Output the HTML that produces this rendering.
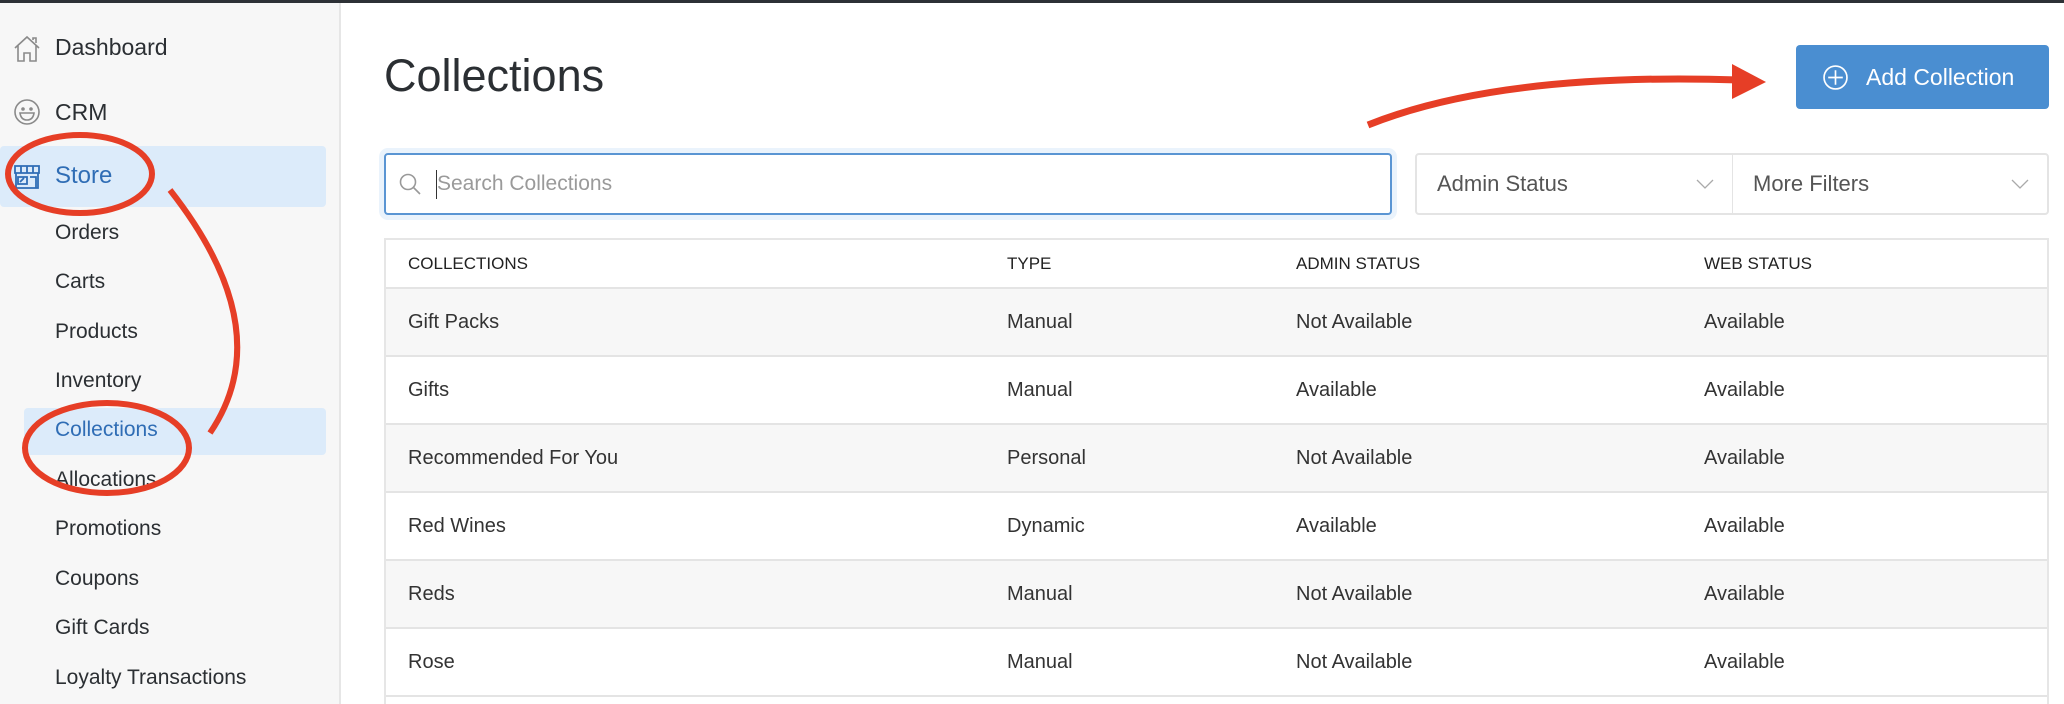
<!DOCTYPE html>
<html style="width:2064px;height:704px;overflow:hidden"><head><style>
*{margin:0;padding:0;box-sizing:border-box}
body{width:2064px;height:704px;overflow:hidden;background:#fff;font-family:"Liberation Sans",sans-serif;color:#2b2f33;position:relative}
.top{position:absolute;left:0;top:0;width:2064px;height:3px;background:#2d3136}
.side{position:absolute;left:0;top:3px;width:341px;height:701px;background:#f7f7f7;border-right:2px solid #e6e6e6}
.it{position:absolute;left:55px;font-size:21px;color:#2b2f33;line-height:24px}
.hl{position:absolute;background:#dcebfa;border-radius:4px}
h1{position:absolute;left:384px;top:50px;font-size:45px;font-weight:normal;color:#2b2f33}
.btn{position:absolute;left:1796px;top:45px;width:253px;height:64px;background:#4a8ed1;border-radius:4px;color:#fff;font-size:23px;line-height:64px}
.search{position:absolute;left:384px;top:153px;width:1008px;height:62px;border:2px solid #5a95d3;border-radius:4px;box-shadow:0 0 0 5px #eaf3fc}
.sel{position:absolute;top:153px;height:62px;border:2px solid #e4e4e4;font-size:22px;color:#555;line-height:58px;padding-left:20px}
.tbl{position:absolute;left:384px;top:238px;width:1665px;height:466px;overflow:hidden;border:2px solid #e6e6e6;border-bottom:none}
table{width:100%;border-collapse:collapse;table-layout:fixed}
td,th{text-align:left;font-weight:normal;border-bottom:2px solid #e4e4e4;padding:0}
th{height:48px;font-size:17px;color:#222}
td{height:68px;font-size:20px;color:#333}
tr.g td{background:#f7f7f7}
td:first-child,th:first-child{padding-left:22px}
</style></head><body>
<div class="top"></div>
<div class="side">
<div class="hl" style="left:0;top:143px;width:326px;height:61px"></div>
<div class="hl" style="left:24px;top:405px;width:302px;height:47px"></div>
<svg style="position:absolute;left:12px;top:30px" width="30" height="30" viewBox="0 0 30 30" fill="none" stroke="#8a8a8a" stroke-width="1.6"><path d="M3 15 L15 4 L27 15 M6 12 V28 H12 V20 H18 V28 H24 V12 M21 7 V5 H24 V10"/></svg>
<div class="it" style="top:32px;font-size:23px">Dashboard</div>
<svg style="position:absolute;left:13px;top:95px" width="28" height="28" viewBox="0 0 28 28" fill="none" stroke="#8a8a8a" stroke-width="1.6"><circle cx="14" cy="14" r="12"/><circle cx="10" cy="11" r="1" fill="#8a8a8a"/><circle cx="18" cy="11" r="1" fill="#8a8a8a"/><path d="M7 15 H21 Q20 22 14 22 Q8 22 7 15Z"/></svg>
<div class="it" style="top:97px;font-size:23px">CRM</div>
<svg style="position:absolute;left:13px;top:161px" width="28" height="26" viewBox="0 0 28 26" fill="none" stroke="#2f6db5" stroke-width="1.8"><path d="M2 2 H26 V9 H2Z M8 2 V9 M14 2 V9 M20 2 V9 M3 9 V24 H25 V9 M17 13 H23 V24 M5 13 H14 V20 H5Z M7 18 L11 14"/></svg>
<div class="it" style="top:161px;font-size:24px;color:#2f6db5">Store</div>
<div class="it" style="top:218px">Orders</div>
<div class="it" style="top:267px">Carts</div>
<div class="it" style="top:317px">Products</div>
<div class="it" style="top:366px">Inventory</div>
<div class="it" style="top:415px;color:#2f6db5">Collections</div>
<div class="it" style="top:465px">Allocations</div>
<div class="it" style="top:514px">Promotions</div>
<div class="it" style="top:564px">Coupons</div>
<div class="it" style="top:613px">Gift Cards</div>
<div class="it" style="top:663px">Loyalty Transactions</div>
</div>
<h1>Collections</h1>
<div class="btn"><svg style="position:absolute;left:27px;top:20px" width="25" height="25" viewBox="0 0 24 24" fill="none" stroke="#fff" stroke-width="1.6"><circle cx="12" cy="12" r="11"/><path d="M12 5 V19 M5 12 H19"/></svg><span style="position:absolute;left:70px">Add Collection</span></div>
<div class="search"><svg style="position:absolute;left:12px;top:17px" width="24" height="24" viewBox="0 0 24 24" fill="none" stroke="#999" stroke-width="1.6"><circle cx="10" cy="10" r="7.5"/><path d="M15.5 15.5 L22 22"/></svg><div style="position:absolute;left:50px;top:15px;width:1px;height:29px;background:#333"></div><span style="position:absolute;left:51px;top:16px;font-size:21px;line-height:26px;color:#9a9a9a">Search Collections</span></div>
<div class="sel" style="left:1415px;width:318px;border-right:1px solid #e4e4e4;border-radius:4px 0 0 4px">Admin Status<svg style="position:absolute;right:18px;top:24px" width="18" height="10" viewBox="0 0 18 10" fill="none" stroke="#aaa" stroke-width="1.3"><path d="M1 1 L9 9 L17 1"/></svg></div>
<div class="sel" style="left:1732px;width:317px;border-left:1px solid #e4e4e4;border-radius:0 4px 4px 0">More Filters<svg style="position:absolute;right:18px;top:24px" width="18" height="10" viewBox="0 0 18 10" fill="none" stroke="#aaa" stroke-width="1.3"><path d="M1 1 L9 9 L17 1"/></svg></div>
<div class="tbl"><table>
<colgroup><col style="width:621px"><col style="width:289px"><col style="width:408px"><col></colgroup>
<tr><th>COLLECTIONS</th><th>TYPE</th><th>ADMIN STATUS</th><th>WEB STATUS</th></tr>
<tr class="g"><td>Gift Packs</td><td>Manual</td><td>Not Available</td><td>Available</td></tr>
<tr><td>Gifts</td><td>Manual</td><td>Available</td><td>Available</td></tr>
<tr class="g"><td>Recommended For You</td><td>Personal</td><td>Not Available</td><td>Available</td></tr>
<tr><td>Red Wines</td><td>Dynamic</td><td>Available</td><td>Available</td></tr>
<tr class="g"><td>Reds</td><td>Manual</td><td>Not Available</td><td>Available</td></tr>
<tr><td>Rose</td><td>Manual</td><td>Not Available</td><td>Available</td></tr>
</table></div>
<svg style="position:absolute;left:0;top:0" width="2064" height="704" fill="none" stroke="#e63e26" stroke-width="6">
<ellipse cx="80" cy="174" rx="72" ry="39"/>
<ellipse cx="107" cy="448" rx="82" ry="45"/>
<path d="M170 190 Q280 330 210 433"/>
<path d="M1368 125 Q1500 72 1740 80" stroke-width="7"/>
<path d="M1732 64 L1766 82 L1732 99Z" fill="#e63e26" stroke="none"/>
</svg>
</body></html>
